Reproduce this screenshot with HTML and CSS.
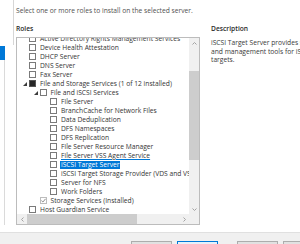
FILE: index.html
```html
<!DOCTYPE html>
<html lang="en">
<head>
    <meta charset="UTF-8">
    <title>Select server roles</title>
    <link rel="stylesheet" href="styles.css">
</head>
<body>
    <div class="wizard">
        <aside class="nav">
            <div class="nav-top"></div>
            <div class="nav-mark"></div>
            <div class="nav-rest"></div>
        </aside>

        <main class="content">
            <p class="intro">Select one or more roles to install on the selected server.</p>

            <div class="columns">
                <section class="roles">
                    <h2>Roles</h2>
                    <div class="listbox">
                        <div class="viewport">
                            <ul class="tree">
                                <li><span class="exp"></span><span class="box"></span><span class="label">Active Directory Rights Management Services</span></li>
                                <li><span class="exp"></span><span class="box"></span><span class="label">Device Health Attestation</span></li>
                                <li><span class="exp"></span><span class="box"></span><span class="label">DHCP Server</span></li>
                                <li><span class="exp"></span><span class="box"></span><span class="label">DNS Server</span></li>
                                <li><span class="exp"></span><span class="box"></span><span class="label">Fax Server</span></li>
                                <li><span class="exp open"><svg width="4" height="4" viewBox="0 0 4 4"><polygon points="4,0 4,4 0,4"/></svg></span><span class="box partial"></span><span class="label">File and Storage Services (1 of 12 installed)</span></li>
                                <li class="lvl1"><span class="exp open"><svg width="4" height="4" viewBox="0 0 4 4"><polygon points="4,0 4,4 0,4"/></svg></span><span class="box"></span><span class="label">File and iSCSI Services</span></li>
                                <li class="lvl2"><span class="exp"></span><span class="box"></span><span class="label">File Server</span></li>
                                <li class="lvl2"><span class="exp"></span><span class="box"></span><span class="label">BranchCache for Network Files</span></li>
                                <li class="lvl2"><span class="exp"></span><span class="box"></span><span class="label">Data Deduplication</span></li>
                                <li class="lvl2"><span class="exp"></span><span class="box"></span><span class="label">DFS Namespaces</span></li>
                                <li class="lvl2"><span class="exp"></span><span class="box"></span><span class="label">DFS Replication</span></li>
                                <li class="lvl2"><span class="exp"></span><span class="box"></span><span class="label">File Server Resource Manager</span></li>
                                <li class="lvl2"><span class="exp"></span><span class="box"></span><span class="label hover">File Server VSS Agent Service</span></li>
                                <li class="lvl2"><span class="exp"></span><span class="box"></span><span class="label selected">iSCSI Target Server</span></li>
                                <li class="lvl2"><span class="exp"></span><span class="box"></span><span class="label">iSCSI Target Storage Provider (VDS and VSS hardware providers)</span></li>
                                <li class="lvl2"><span class="exp"></span><span class="box"></span><span class="label">Server for NFS</span></li>
                                <li class="lvl2"><span class="exp"></span><span class="box"></span><span class="label">Work Folders</span></li>
                                <li class="lvl1"><span class="exp"></span><span class="box checked"><svg width="5" height="5" viewBox="0 0 5 5"><polyline points="0.4,2.6 1.9,4 4.6,0.8"/></svg></span><span class="label">Storage Services (Installed)</span></li>
                                <li><span class="exp"></span><span class="box"></span><span class="label">Host Guardian Service</span></li>
                                <li><span class="exp"></span><span class="box"></span><span class="label">Hyper-V</span></li>
                            </ul>
                        </div>

                        <div class="vscroll">
                            <span class="arrow"><svg width="5" height="3" viewBox="0 0 5 3"><polyline points="0.5,2.5 2.5,0.5 4.5,2.5"/></svg></span>
                            <div class="track"><div class="thumb"></div></div>
                            <span class="arrow"><svg width="5" height="3" viewBox="0 0 5 3"><polyline points="0.5,0.5 2.5,2.5 4.5,0.5"/></svg></span>
                        </div>

                        <div class="hscroll">
                            <span class="arrow"><svg width="3" height="5" viewBox="0 0 3 5"><polyline points="2.5,0.5 0.5,2.5 2.5,4.5"/></svg></span>
                            <div class="track"><div class="thumb"></div></div>
                            <span class="arrow"><svg width="3" height="5" viewBox="0 0 3 5"><polyline points="0.5,0.5 2.5,2.5 0.5,4.5"/></svg></span>
                        </div>

                        <div class="corner"></div>
                    </div>
                </section>

                <section class="desc">
                    <h2>Description</h2>
                    <p>iSCSI Target Server provides services<br>and management tools for iSCSI<br>targets.</p>
                </section>
            </div>
        </main>
    </div>

    <footer class="buttons">
        <button class="btn">&lt; Previous</button>
        <button class="btn next">Next &gt;</button>
        <button class="btn">Install</button>
        <button class="btn">Cancel</button>
    </footer>
</body>
</html>
```

FILE: styles.css
```css
* {
    margin: 0;
    padding: 0;
    box-sizing: border-box;
}

body {
    width: 300px;
    height: 244px;
    overflow: hidden;
    background-color: #ffffff;
    color: #343434;
    font-family: 'Open Sans', 'Noto Sans', sans-serif;
    font-size: 6.7px;
}

.wizard {
    display: flex;
    height: 232px;
}

/* left navigation pane edge */
.nav {
    width: 16px;
    flex-shrink: 0;
    display: flex;
    flex-direction: column;
}

.nav-top {
    width: 14px;
    height: 45px;
    border-right: 1px solid #d6d6d6;
}

.nav-mark {
    width: 5px;
    height: 14px;
    margin-top: 1px;
    background-color: #0078d7;
}

.nav-rest {
    width: 5px;
    height: 165px;
    border-right: 1px solid #dadada;
}

.content {
    flex: 1;
    min-width: 0;
    padding-top: 6px;
}

.intro {
    line-height: 9px;
    color: #505050;
    white-space: nowrap;
}

.columns {
    display: flex;
    gap: 11px;
    margin-top: 9px;
}

h2 {
    font-size: 6.7px;
    font-weight: 600;
    line-height: 9px;
    color: #2a2a2a;
}

.roles {
    width: 184px;
    flex-shrink: 0;
}

.listbox {
    margin-top: 4px;
    height: 188px;
    border: 1px solid #bcbcbc;
    display: grid;
    grid-template-columns: 1fr 10px;
    grid-template-rows: 1fr 10px;
}

.viewport {
    overflow: hidden;
}

.tree {
    list-style: none;
    margin-top: -4px;
}

.tree li {
    height: 9px;
    display: flex;
    align-items: center;
    white-space: nowrap;
    padding-left: 4px;
}

.tree li.lvl1 {
    padding-left: 14.5px;
}

.tree li.lvl2 {
    padding-left: 25px;
}

.exp {
    width: 8px;
    height: 9px;
    flex-shrink: 0;
    display: flex;
    align-items: center;
    justify-content: center;
}

.exp svg {
    fill: #3c3c3c;
}

.box {
    width: 7px;
    height: 7px;
    margin-right: 4px;
    flex-shrink: 0;
    border: 1px solid #7a7a7a;
    background-color: #fff;
    display: flex;
    align-items: center;
    justify-content: center;
}

.box.partial {
    border-color: #555;
    background-color: #262626;
}

.box.checked {
    border-color: #bdbdbd;
}

.box.checked svg {
    fill: none;
    stroke: #8c8c8c;
    stroke-width: 1;
}

.label {
    line-height: 9px;
}

.label.hover {
    text-decoration: underline;
    text-decoration-color: #0078d7;
}

.label.selected {
    background-color: #0078d7;
    color: #fff;
    line-height: 8px;
    padding: 0 1px;
    margin-left: -1px;
}

/* fake scrollbars */
.vscroll,
.hscroll,
.corner {
    background-color: #f0f0f0;
}

.vscroll {
    display: flex;
    flex-direction: column;
}

.hscroll {
    display: flex;
}

.arrow {
    width: 10px;
    height: 10px;
    flex-shrink: 0;
    display: flex;
    align-items: center;
    justify-content: center;
}

.arrow svg {
    fill: none;
    stroke: #a3a3a3;
    stroke-width: 1;
}

.track {
    flex: 1;
}

.vscroll .thumb {
    margin-top: 23px;
    height: 89px;
    background-color: #cdcdcd;
}

.hscroll .thumb {
    width: 110px;
    height: 100%;
    background-color: #cdcdcd;
}

.desc {
    flex-shrink: 0;
}

.desc p {
    margin-top: 6px;
    line-height: 8.5px;
    color: #3a3a3a;
    white-space: nowrap;
}

.buttons {
    height: 12px;
    display: flex;
    padding: 8px 0 0 131px;
    background-color: #f0f0f0;
    border-top: 1px solid #e0e0e0;
}

.btn {
    width: 41px;
    height: 14px;
    flex-shrink: 0;
    margin-right: 5px;
    border: 1px solid #adadad;
    background-color: #e1e1e1;
    font-family: 'Open Sans', sans-serif;
    font-size: 6.7px;
    color: #222;
}

.btn.next {
    border-color: #0078d7;
    background-color: #e5f1fb;
    margin-right: 19px;
}
```
